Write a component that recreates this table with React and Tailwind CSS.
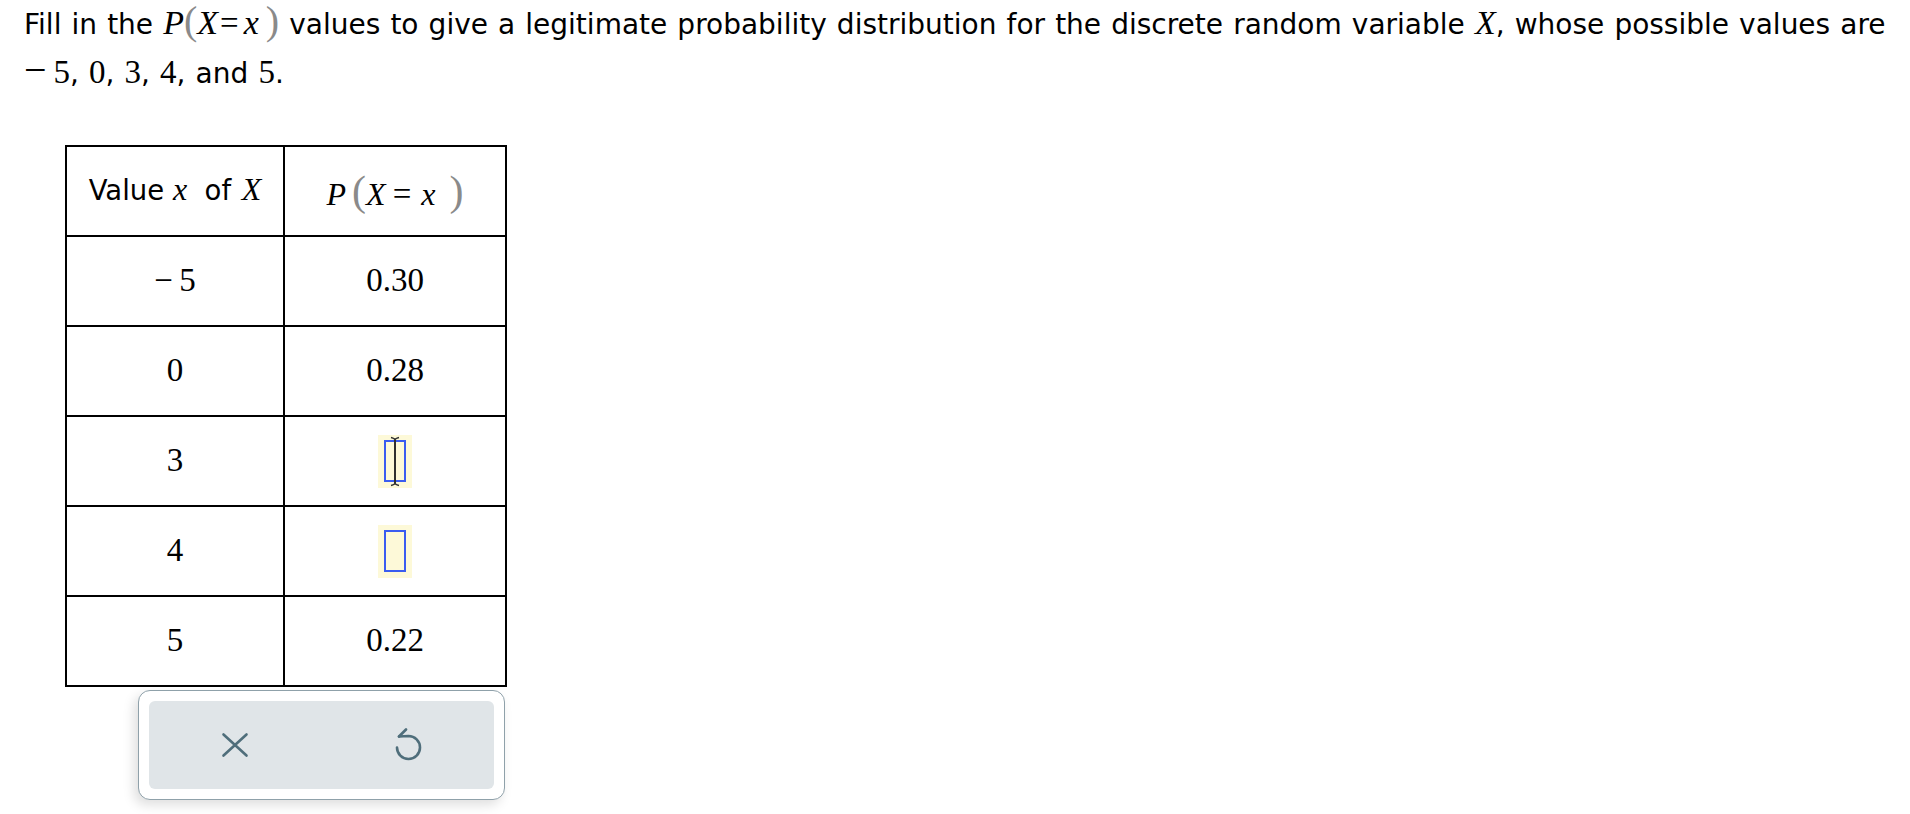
import React from "react";

function Paren({ children, size }) {
  return (
    <span
      className={
        size === "lg"
          ? "font-['Liberation_Serif',serif] text-[42px] leading-none text-[#8a8a8a]"
          : "font-['Liberation_Serif',serif] text-[40px] leading-none text-[#8a8a8a]"
      }
    >
      {children}
    </span>
  );
}

function MI({ children, className = "" }) {
  return (
    <span
      className={
        "font-['Liberation_Serif',serif] italic text-[34px] leading-none " +
        className
      }
    >
      {children}
    </span>
  );
}

function MIs({ children, className = "" }) {
  return (
    <span
      className={
        "font-['Liberation_Serif',serif] italic text-[32px] leading-none " +
        className
      }
    >
      {children}
    </span>
  );
}

function MN({ children, className = "" }) {
  return (
    <span
      className={
        "font-['Liberation_Serif',serif] text-[33px] leading-none " + className
      }
    >
      {children}
    </span>
  );
}

function InputBox({ cursor }) {
  return (
    <div className="relative mx-auto flex h-[53px] w-[34px] items-center justify-center bg-[#fdf9d8]">
      <div className="h-[42px] w-[22px] border-2 border-[#3a5cf0]" />
      {cursor && (
        <svg
          className="absolute left-[11px] top-[1px]"
          width="12"
          height="51"
          viewBox="0 0 12 51"
        >
          <path d="M6 4 V47" stroke="#2f2f2f" strokeWidth="2" fill="none" />
          <path
            d="M2 1.5 Q6 2.5 6 4 Q6 2.5 10 1.5"
            stroke="#2f2f2f"
            strokeWidth="1.5"
            fill="none"
          />
          <path
            d="M2 49.5 Q6 48.5 6 47 Q6 48.5 10 49.5"
            stroke="#2f2f2f"
            strokeWidth="1.5"
            fill="none"
          />
        </svg>
      )}
    </div>
  );
}

export default function App() {
  const rows = [
    { x: "−\u20095", p: "0.30" },
    { x: "0", p: "0.28" },
    { x: "3", p: null, cursor: true },
    { x: "4", p: null },
    { x: "5", p: "0.22" },
  ];
  return (
    <div className="min-h-[814px] w-[1910px] bg-white pl-[24px] pr-[6px] text-black font-['DejaVu_Sans',sans-serif]">
      <p className="text-[28px] leading-[49px] [word-spacing:1.2px]">
        Fill in the <MI>P</MI>
        <Paren>(</Paren>
        <MI className="mr-[2px]">X</MI>
        <MN className="mr-[5px]">=</MN>
        <MI className="mr-[7px]">x</MI>
        <Paren>)</Paren> values to give a legitimate probability distribution
        for the discrete random variable <MI>X</MI>, whose possible values are{" "}
        <span className="font-['Liberation_Serif',serif] text-[40px] leading-none mr-[7px]">
          −
        </span>
        <MN>5</MN>, <MN>0</MN>, <MN>3</MN>, <MN>4</MN>, and <MN>5</MN>.
      </p>

      <table className="ml-[41px] mt-[47px] border-collapse">
        <tbody>
          <tr className="h-[90px]">
            <td className="w-[218px] border-2 border-black p-0 text-center text-[27.5px]">
              Value&nbsp;<MIs>x</MIs>&nbsp;&nbsp;of&nbsp;
              <MIs className="ml-[2px]">X</MIs>
            </td>
            <td className="w-[222px] border-2 border-black p-0 text-center">
              <MIs className="mr-[6px]">P</MIs>
              <Paren size="lg">(</Paren>
              <MIs className="mr-[7px]">X</MIs>
              <MN className="mr-[10px] text-[32px]">=</MN>
              <MIs className="mr-[14px]">x</MIs>
              <Paren size="lg">)</Paren>
            </td>
          </tr>
          {rows.map((r, i) => (
            <tr key={i} className="h-[90px]">
              <td className="border-2 border-black p-0 text-center">
                <MN>{r.x}</MN>
              </td>
              <td className="border-2 border-black p-0 text-center">
                {r.p ? <MN>{r.p}</MN> : <InputBox cursor={r.cursor} />}
              </td>
            </tr>
          ))}
        </tbody>
      </table>

      <div className="ml-[114px] mt-[3px] h-[110px] w-[367px] rounded-[12px] border-[1.5px] border-[#8fa1aa] bg-white p-[10px] shadow-[-4px_5px_12px_rgba(0,0,0,0.13)]">
        <div className="flex h-full rounded-[6px] bg-[#e0e5e8]">
          <div className="flex flex-1 items-center justify-center">
            <svg width="28" height="28" viewBox="0 0 28 28">
              <path
                d="M2.5 3.5 L25.5 24.5 M25.5 3.5 L2.5 24.5"
                stroke="#4f6e7b"
                strokeWidth="2.6"
                strokeLinecap="round"
                fill="none"
              />
            </svg>
          </div>
          <div className="flex flex-1 items-center justify-center">
            <svg width="34" height="34" viewBox="0 0 34 34">
              <path
                d="M8 8.5 L17.5 8 A11.5 11.5 0 1 1 6 19.5"
                stroke="#4f6e7b"
                strokeWidth="2.6"
                strokeLinecap="round"
                strokeLinejoin="round"
                fill="none"
              />
              <path
                d="M15 1.5 L8 8.5"
                stroke="#4f6e7b"
                strokeWidth="2.6"
                strokeLinecap="round"
                fill="none"
              />
            </svg>
          </div>
        </div>
      </div>
    </div>
  );
}
